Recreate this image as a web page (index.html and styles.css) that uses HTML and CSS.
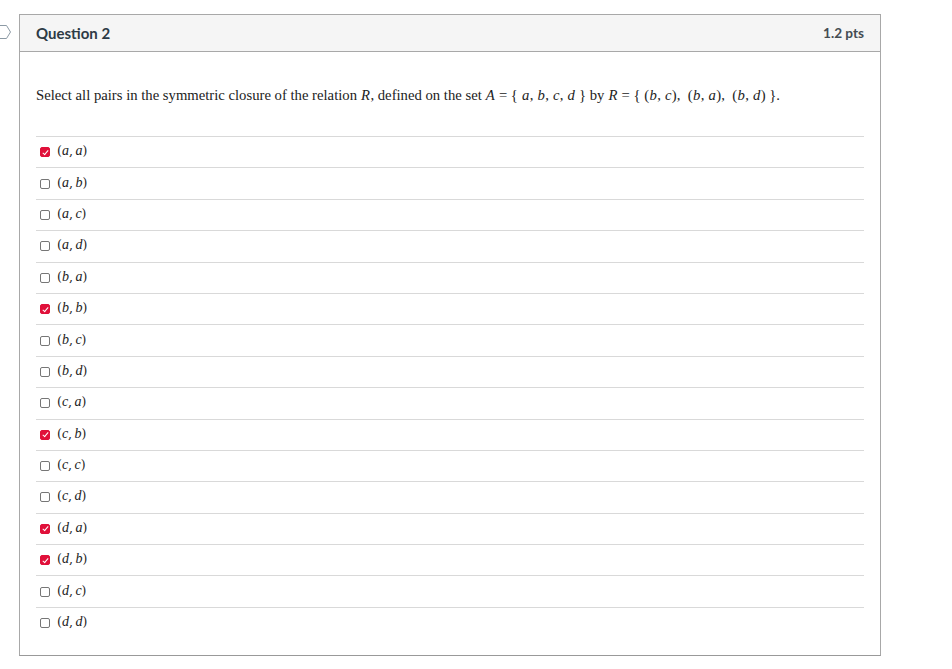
FILE: index.html
```html
<!DOCTYPE html>
<html>
<head>
<meta charset="utf-8">
<link rel="stylesheet" href="styles.css">
</head>
<body>
<div class="page">
  <div class="flag"><svg width="12" height="16" viewBox="0 0 12 16"><path d="M-4 1.5 H6.5 L10.5 8 L6.5 14.5 H-4" fill="none" stroke="#8c9aa5" stroke-width="1"/></svg></div>
  <div class="card">
    <div class="header">
      <div class="title">Question 2</div>
      <div class="pts">1.2 pts</div>
    </div>
    <div class="content">
      <p class="prompt">Select all pairs in the symmetric closure of the relation <i>R</i>, defined on the set <i>A</i> = { <i>a</i>, <i>b</i>, <i>c</i>, <i>d</i> } by <i>R</i> = { (<i>b</i>, <i>c</i>), &nbsp;(<i>b</i>, <i>a</i>), &nbsp;(<i>b</i>, <i>d</i>) }.</p>
      <div class="answers">
        <div class="row"><span class="cb on"></span><span class="m">(<i>a</i>,&thinsp;<i>a</i>)</span></div>
        <div class="row"><span class="cb"></span><span class="m">(<i>a</i>,&thinsp;<i>b</i>)</span></div>
        <div class="row"><span class="cb"></span><span class="m">(<i>a</i>,&thinsp;<i>c</i>)</span></div>
        <div class="row"><span class="cb"></span><span class="m">(<i>a</i>,&thinsp;<i>d</i>)</span></div>
        <div class="row"><span class="cb"></span><span class="m">(<i>b</i>,&thinsp;<i>a</i>)</span></div>
        <div class="row"><span class="cb on"></span><span class="m">(<i>b</i>,&thinsp;<i>b</i>)</span></div>
        <div class="row"><span class="cb"></span><span class="m">(<i>b</i>,&thinsp;<i>c</i>)</span></div>
        <div class="row"><span class="cb"></span><span class="m">(<i>b</i>,&thinsp;<i>d</i>)</span></div>
        <div class="row"><span class="cb"></span><span class="m">(<i>c</i>,&thinsp;<i>a</i>)</span></div>
        <div class="row"><span class="cb on"></span><span class="m">(<i>c</i>,&thinsp;<i>b</i>)</span></div>
        <div class="row"><span class="cb"></span><span class="m">(<i>c</i>,&thinsp;<i>c</i>)</span></div>
        <div class="row"><span class="cb"></span><span class="m">(<i>c</i>,&thinsp;<i>d</i>)</span></div>
        <div class="row"><span class="cb on"></span><span class="m">(<i>d</i>,&thinsp;<i>a</i>)</span></div>
        <div class="row"><span class="cb on"></span><span class="m">(<i>d</i>,&thinsp;<i>b</i>)</span></div>
        <div class="row"><span class="cb"></span><span class="m">(<i>d</i>,&thinsp;<i>c</i>)</span></div>
        <div class="row"><span class="cb"></span><span class="m">(<i>d</i>,&thinsp;<i>d</i>)</span></div>
      </div>
    </div>
  </div>
</div>
</body>
</html>
```

FILE: styles.css
```css
html, body {
  margin: 0;
  padding: 0;
  background: #ffffff;
}
.page {
  position: relative;
  padding: 14px 0 0 19px;
}
.flag {
  position: absolute;
  left: 0;
  top: 24px;
  width: 12px;
  height: 16px;
}
.flag svg { display: block; }
.card {
  width: 860px;
  border: 1px solid #a8a8a8;
  border-bottom-color: #999999;
}
.header {
  height: 36px;
  background: #f5f5f5;
  border-bottom: 1px solid #a8a8a8;
  display: flex;
  align-items: center;
  justify-content: space-between;
  padding: 0 16px;
  font-family: Lato, "Liberation Sans", sans-serif;
  font-weight: 700;
}
.title {
  font-size: 15px;
  color: #2d3b45;
}
.pts {
  font-size: 13.6px;
  color: #444c52;
}
.content {
  padding: 35px 16px 17px 16px;
}
.prompt {
  margin: 0 0 33px 0;
  font-family: "Liberation Serif", "Times New Roman", serif;
  font-size: 14.7px;
  line-height: 16px;
  color: #222;
}
.prompt i {
  padding: 0 0.4px;
}
.answers {
  display: flex;
  flex-direction: column;
}
.row {
  height: 30.4px;
  border-top: 1px solid #d9d9d9;
  display: flex;
  align-items: center;
  padding-left: 4px;
  gap: 7px;
}
.cb {
  width: 8px;
  height: 8px;
  border: 1px solid #767676;
  border-radius: 2px;
  background: #fff;
  position: relative;
}
.cb.on {
  background: #e0103a;
  border-color: #e0103a;
}
.cb.on::after {
  content: "";
  position: absolute;
  left: 2.5px;
  top: 0.5px;
  width: 2px;
  height: 5px;
  border: solid #fff;
  border-width: 0 1.6px 1.6px 0;
  transform: rotate(40deg);
}
.m {
  font-family: "DejaVu Serif", "Liberation Serif", serif;
  font-size: 12.5px;
  color: #222;
  line-height: 16px;
  position: relative;
  top: -1px;
}
.m i {
  font-family: "Liberation Serif", serif;
  font-size: 14px;
}
```
